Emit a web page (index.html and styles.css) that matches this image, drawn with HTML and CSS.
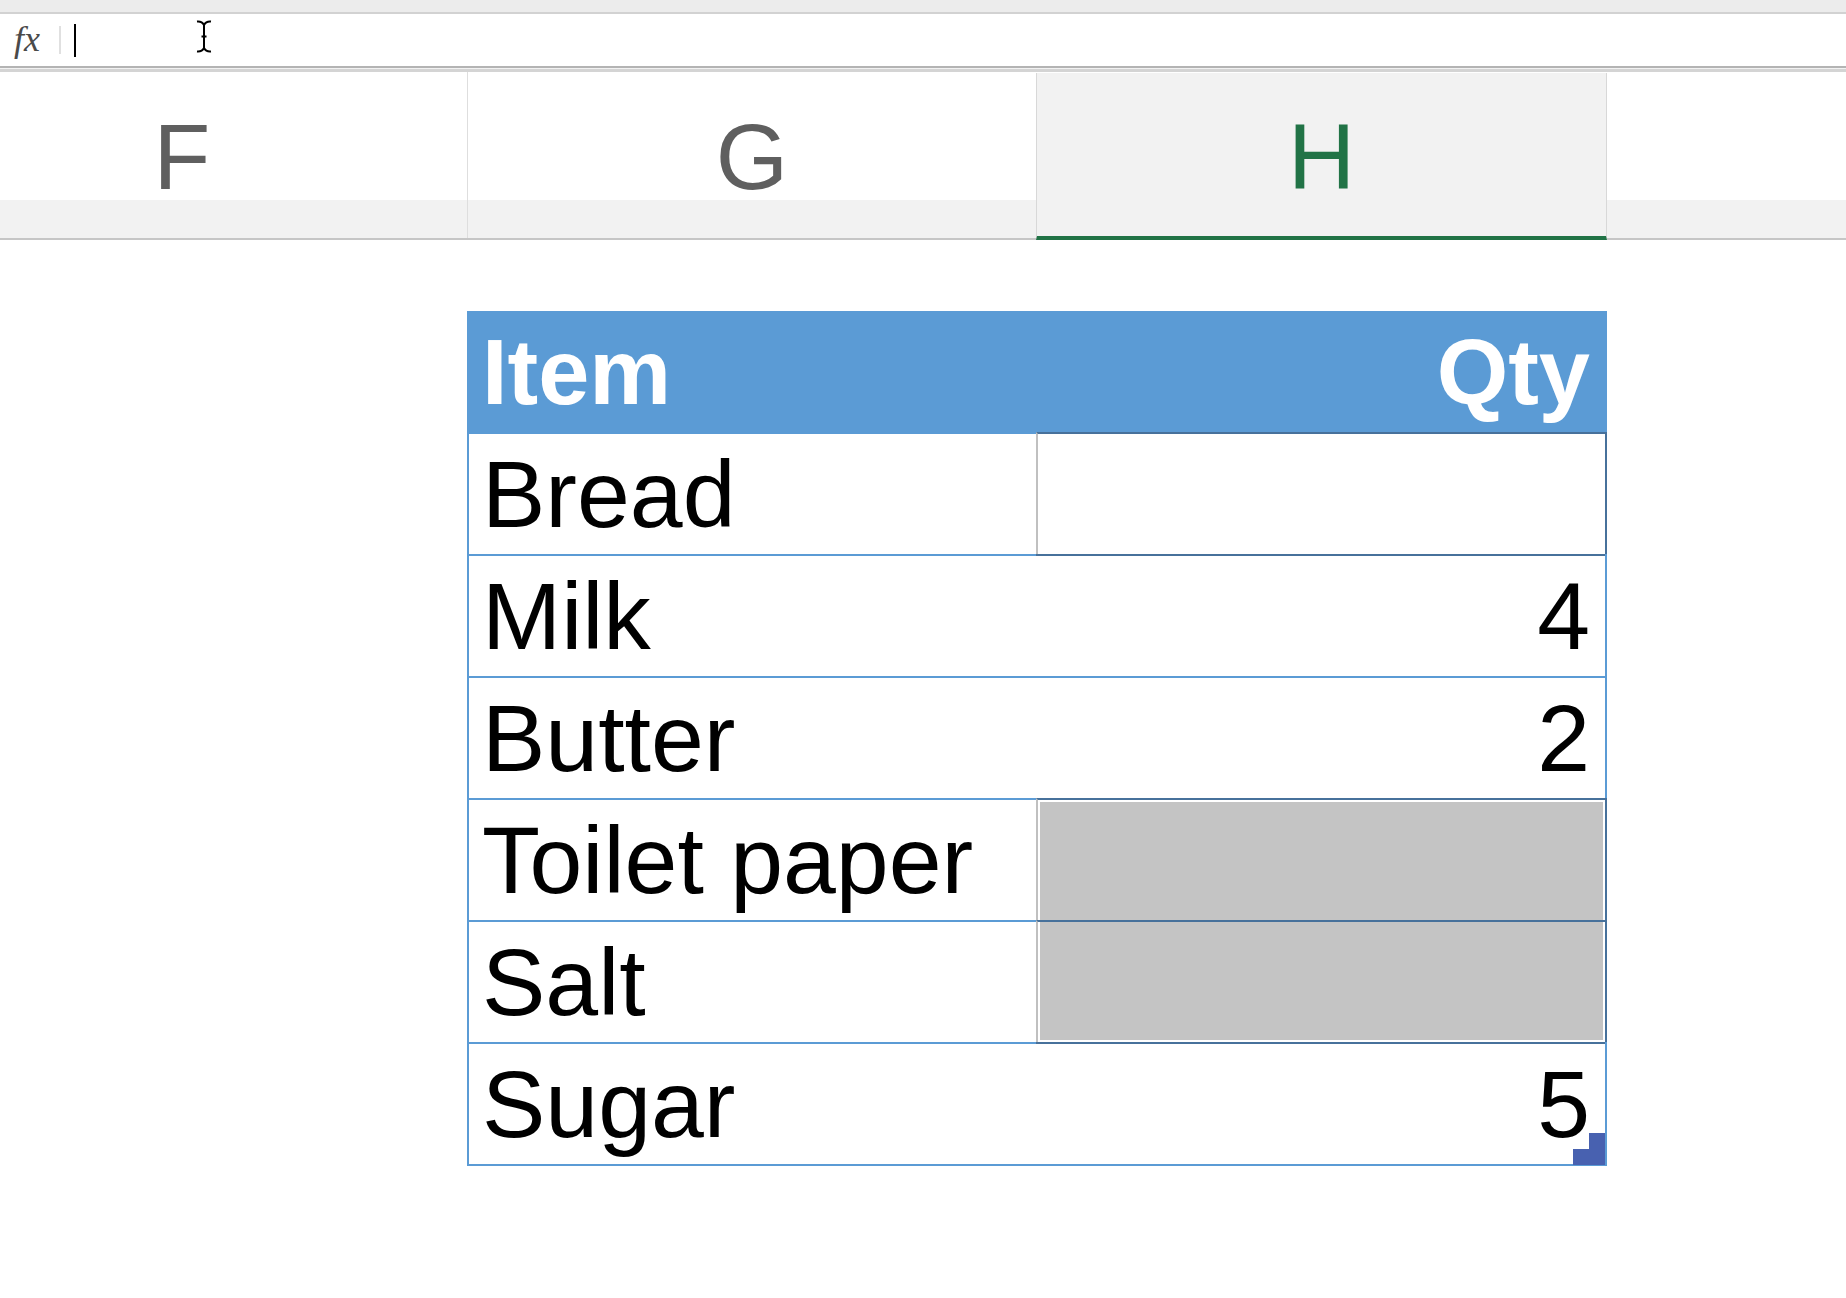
FILE: index.html
```html
<!DOCTYPE html>
<html lang="en">
<head>
<meta charset="utf-8">
<title>Sheet</title>
<link rel="stylesheet" href="styles.css">
</head>
<body>
<div class="app">
  <div class="topband"></div>
  <div class="fbar">
    <span class="fx">fx</span>
    <span class="sep"></span>
    <span class="caret"></span>
    <svg class="ibeam" width="16" height="33" viewBox="0 0 16 33">
      <path d="M1 1.5 Q6 1 8 5 Q10 1 15 1.5 M8 5 V28 M1 31.5 Q6 32 8 28 Q10 32 15 31.5 M5.5 16.5 H10.5" fill="none" stroke="#000" stroke-width="2"/>
    </svg>
  </div>
  <div class="dbl"></div>
  <div class="colhdr">
    <div class="col col-f">F</div>
    <div class="col col-g">G</div>
    <div class="col col-h">H</div>
    <div class="col col-rest"></div>
  </div>
  <div class="sheet">
    <div class="tbl">
      <div class="row hdr"><div class="c item">Item</div><div class="c qty">Qty</div></div>
      <div class="row"><div class="c item">Bread</div><div class="c qty dark-top sel"></div></div>
      <div class="row"><div class="c item">Milk</div><div class="c qty dark-top">4</div></div>
      <div class="row"><div class="c item">Butter</div><div class="c qty">2</div></div>
      <div class="row"><div class="c item">Toilet paper</div><div class="c qty dark-top sel gray gray-first"></div></div>
      <div class="row"><div class="c item">Salt</div><div class="c qty dark-top sel gray gray-last"></div></div>
      <div class="row"><div class="c item">Sugar</div><div class="c qty dark-top last">5<svg class="handle" width="32" height="32" viewBox="0 0 32 32"><path d="M16 0 H32 V32 H0 V16 H16 Z" fill="#4861b0"/></svg></div></div>
    </div>
  </div>
</div>
</body>
</html>
```
FILE: styles.css
```css
html, body {
  margin: 0;
  padding: 0;
  background: #ffffff;
}
body {
  font-family: "Liberation Sans", Arial, sans-serif;
  overflow: hidden;
}
.app {
  width: 1846px;
  height: 1298px;
}
.topband {
  height: 12px;
  background: #ececec;
  border-bottom: 2px solid #d2d2d2;
}
.fbar {
  height: 52px;
  display: flex;
  align-items: center;
  padding-left: 14px;
  background: #ffffff;
}
.fx {
  width: 45px;
  font-family: "Liberation Serif", "DejaVu Serif", serif;
  font-style: italic;
  font-size: 36px;
  color: #4a4a4a;
  line-height: 1;
  margin-top: -2px;
}
.sep {
  width: 2px;
  height: 28px;
  background: #e0e0e0;
}
.caret {
  width: 2px;
  height: 33px;
  margin-left: 13px;
  background: #000000;
}
.ibeam {
  margin-left: 120px;
  align-self: flex-start;
  margin-top: 6px;
}
.dbl {
  height: 1px;
  background: #f2f2f2;
  border-top: 2px solid #b4b4b4;
  border-bottom: 3px solid #d4d4d4;
}
.colhdr {
  height: 166px;
  display: flex;
  border-bottom: 2px solid #c6c6c6;
}
.col {
  flex: none;
  box-sizing: border-box;
  height: 166px;
  padding-top: 39px;
  text-align: center;
  font-size: 93px;
  line-height: 93px;
  color: #5f5f5f;
  background: linear-gradient(to bottom, #ffffff 128px, #f2f2f2 128px);
}
.col-f {
  width: 570px;
  margin-left: -103px;
}
.col-g {
  width: 569px;
  border-left: 1px solid #dedede;
}
.col-h {
  width: 571px;
  height: 167px;
  margin-top: 1px;
  padding-top: 38px;
  background: #f2f2f2;
  color: #217346;
  border-left: 1px solid #d8d8d8;
  border-right: 1px solid #d8d8d8;
  border-bottom: 4px solid #217346;
}
.col-rest {
  flex: 1;
}
.sheet {
  padding-top: 71px;
  padding-left: 467px;
}
.tbl {
  width: 1140px;
  box-sizing: border-box;
  border: 2px solid #5b9bd5;
  border-top: 0;
}
.row {
  display: grid;
  grid-template-columns: 567px 569px;
  height: 122px;
}
.row.hdr {
  height: 121px;
  background: #5b9bd5;
}
.c {
  box-sizing: border-box;
  display: flex;
  align-items: center;
  padding: 0 15px 0 13px;
  font-size: 95px;
  color: #000000;
  white-space: nowrap;
  border-top: 2px solid #5b9bd5;
  position: relative;
}
.hdr .c {
  border-top: 0;
  padding-top: 2px;
  color: #ffffff;
  font-weight: bold;
  font-size: 92px;
}
.item {
  justify-content: flex-start;
}
.qty {
  justify-content: flex-end;
}
.dark-top {
  border-top-color: #47719b;
}
.sel {
  border-left: 2px solid #c0c0c0;
  border-right: 2px solid #47719b;
  margin-right: -2px;
}
.gray {
  background: #c4c4c4;
  background-clip: content-box;
  padding: 0 2px;
}
.gray-first {
  padding-top: 2px;
}
.gray-last {
  padding-bottom: 2px;
}
.handle {
  position: absolute;
  right: 0;
  bottom: -1px;
}
```
